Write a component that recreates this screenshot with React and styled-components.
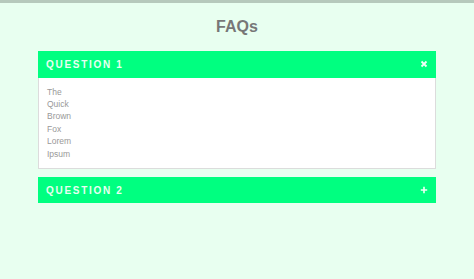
import React, { useState } from "react";
import styled, { createGlobalStyle } from "styled-components";

const Global = createGlobalStyle`
  html, body { margin: 0; padding: 0; background: #e8fff0; }
  body { font-family: "Liberation Sans", Arial, sans-serif; }
`;

const Page = styled.div`
  min-height: 100vh;
  box-sizing: border-box;
  border-top: 3px solid #b6c9bc;
  background: #e8fff0;
  padding: 0 38px;
`;

const Title = styled.h1`
  margin: 14px 0 14px;
  font-size: 16px;
  line-height: 20px;
  font-weight: 700;
  color: #777;
  text-align: center;
`;

const List = styled.div`
  display: flex;
  flex-direction: column;
  gap: 8px;
`;

const Item = styled.div`
  display: flex;
  flex-direction: column;
`;

const Header = styled.button`
  all: unset;
  box-sizing: border-box;
  height: 26.5px;
  padding: 0 8px;
  display: flex;
  align-items: center;
  justify-content: space-between;
  background: #00ff80;
  color: #e8fff2;
  cursor: pointer;
`;

const Label = styled.span`
  font-size: 10px;
  font-weight: 700;
  letter-spacing: 1.7px;
  text-transform: uppercase;
`;

const Body = styled.div`
  background: #fff;
  border: 1px solid #dcdcdc;
  border-top: none;
  padding: 8px;
  font-size: 8.5px;
  line-height: 12.4px;
  color: #999;
`;

const Line = styled.div``;

const Icon = ({ open }) => (
  <svg width="8" height="8" viewBox="0 0 8 8">
    {open ? (
      <path d="M1.5 1.5 L6.5 6.5 M6.5 1.5 L1.5 6.5" stroke="#f0fff6" strokeWidth="1.8" />
    ) : (
      <path d="M4 0.8 V7.2 M0.8 4 H7.2" stroke="#f0fff6" strokeWidth="1.6" />
    )}
  </svg>
);

const items = [
  { q: "Question 1", a: ["The", "Quick", "Brown", "Fox", "Lorem", "Ipsum"] },
  { q: "Question 2", a: ["Lorem", "Ipsum"] },
];

export default function App() {
  const [open, setOpen] = useState(0);
  return (
    <>
      <Global />
      <Page>
        <Title>FAQs</Title>
        <List>
          {items.map((it, i) => (
            <Item key={i}>
              <Header onClick={() => setOpen(open === i ? -1 : i)}>
                <Label>{it.q}</Label>
                <Icon open={open === i} />
              </Header>
              {open === i && (
                <Body>
                  {it.a.map((l) => (
                    <Line key={l}>{l}</Line>
                  ))}
                </Body>
              )}
            </Item>
          ))}
        </List>
      </Page>
    </>
  );
}
